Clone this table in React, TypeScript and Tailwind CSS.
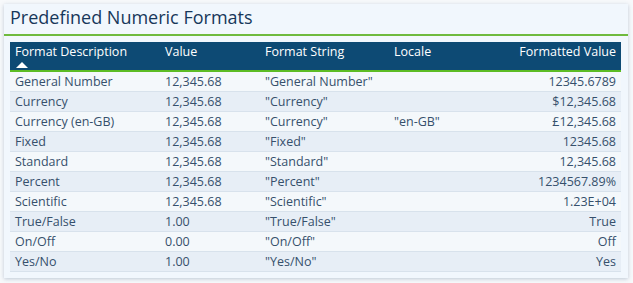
import React from 'react';

interface Row {
    desc: string;
    value: string;
    format: string;
    locale: string;
    formatted: string;
}

const rows: Row[] = [
    { desc: 'General Number', value: '12,345.68', format: '"General Number"', locale: '', formatted: '12345.6789' },
    { desc: 'Currency', value: '12,345.68', format: '"Currency"', locale: '', formatted: '$12,345.68' },
    { desc: 'Currency (en-GB)', value: '12,345.68', format: '"Currency"', locale: '"en-GB"', formatted: '£12,345.68' },
    { desc: 'Fixed', value: '12,345.68', format: '"Fixed"', locale: '', formatted: '12345.68' },
    { desc: 'Standard', value: '12,345.68', format: '"Standard"', locale: '', formatted: '12,345.68' },
    { desc: 'Percent', value: '12,345.68', format: '"Percent"', locale: '', formatted: '1234567.89%' },
    { desc: 'Scientific', value: '12,345.68', format: '"Scientific"', locale: '', formatted: '1.23E+04' },
    { desc: 'True/False', value: '1.00', format: '"True/False"', locale: '', formatted: 'True' },
    { desc: 'On/Off', value: '0.00', format: '"On/Off"', locale: '', formatted: 'Off' },
    { desc: 'Yes/No', value: '1.00', format: '"Yes/No"', locale: '', formatted: 'Yes' },
];

const App: React.FC = () => {
    return (
        <div
            className="w-[633px] h-[283px] bg-[#f7f9fb] p-[4px]"
            style={{ fontFamily: '"Open Sans", "Noto Sans", sans-serif' }}
        >
            <div className="w-[624px] h-[274px] bg-[#f1f7fd] shadow-[0_1px_4px_rgba(60,90,130,0.3)]">
                <div className="h-[30px] px-[6px] text-[18px] leading-[26px] text-[#17375a]">
                    Predefined Numeric Formats
                </div>
                <div className="h-[2px] bg-[#6fba3e]" />
                <div className="px-[6px] pt-[6px]">
                    <table className="w-[611px] table-fixed border-collapse text-[12.5px] text-[#36506c]">
                        <colgroup>
                            <col className="w-[155px]" />
                            <col className="w-[100px]" />
                            <col className="w-[129px]" />
                            <col className="w-[100px]" />
                            <col />
                        </colgroup>
                        <thead>
                            <tr className="bg-[#0d4a74] text-white border-b-[2px] border-[#5cbc24] h-[29px] align-top">
                                <th className="pl-[5px] pt-[1px] text-left font-normal leading-[18px]">
                                    Format Description
                                    <div className="h-[8px] flex items-start pl-[1px] pt-[1px]">
                                        <svg width="12" height="6" viewBox="0 0 12 6">
                                            <path d="M0 6 L6 0 L12 6 Z" fill="#ffffff" />
                                        </svg>
                                    </div>
                                </th>
                                <th className="text-left font-normal pt-[1px] leading-[18px]">Value</th>
                                <th className="text-left font-normal pt-[1px] leading-[18px]">Format String</th>
                                <th className="text-left font-normal pt-[1px] leading-[18px]">Locale</th>
                                <th className="pr-[5px] text-right font-normal pt-[1px] leading-[18px]">Formatted Value</th>
                            </tr>
                        </thead>
                        <tbody>
                            {rows.map((r, i) => (
                                <tr
                                    key={r.desc}
                                    className={`h-[20px] border-b border-[#d8e2ec] ${i % 2 === 0 ? 'bg-[#f4f8fb]' : 'bg-[#e7eef6]'}`}
                                >
                                    <td className="pl-[5px] leading-[19px]">{r.desc}</td>
                                    <td className="leading-[19px]">{r.value}</td>
                                    <td className="leading-[19px]">{r.format}</td>
                                    <td className="leading-[19px]">{r.locale}</td>
                                    <td className="pr-[5px] text-right leading-[19px]">{r.formatted}</td>
                                </tr>
                            ))}
                        </tbody>
                    </table>
                </div>
            </div>
        </div>
    );
};

export default App;
